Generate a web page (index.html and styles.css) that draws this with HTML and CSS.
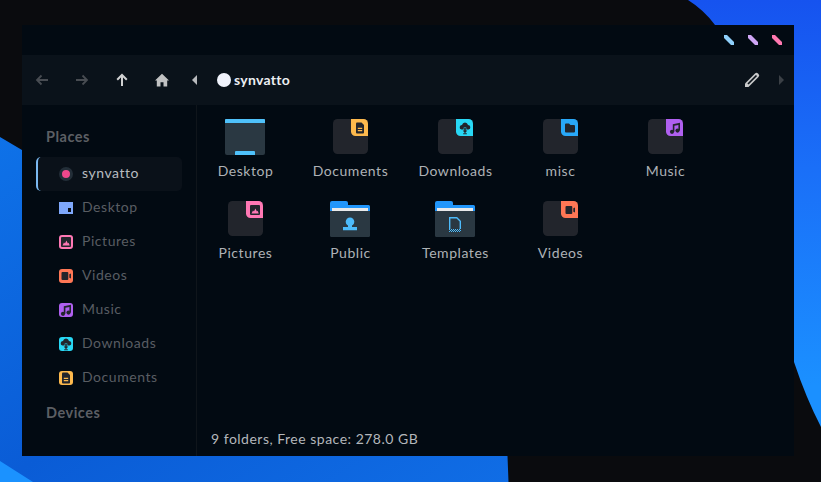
FILE: index.html
```html
<!DOCTYPE html>
<html lang="en">
<head>
<meta charset="utf-8">
<title>synvatto - Dolphin</title>
<link rel="stylesheet" href="styles.css">
</head>
<body>
<svg class="wallpaper" viewBox="0 0 821 482" aria-hidden="true">
  <defs>
    <linearGradient id="wpRight" x1="0" y1="0" x2="0" y2="1"><stop offset="0" stop-color="#1653ef"/><stop offset="0.35" stop-color="#1a6ff8"/><stop offset="0.8" stop-color="#1b90ff"/></linearGradient>
    <linearGradient id="wpLeft" x1="0" y1="0" x2="1" y2="1"><stop offset="0" stop-color="#0f74ea"/><stop offset="0.5" stop-color="#0a5cd6"/><stop offset="1" stop-color="#1170e8"/></linearGradient>
  </defs>
  <rect x="600" width="221" height="482" fill="url(#wpRight)"/>
  <rect width="600" y="100" height="382" fill="url(#wpLeft)"/>
  <path d="M0 461 L33 482 L0 482 Z" fill="#1b92ff"/>
  <path d="M0 0 H688 Q704 10 715 25 L794 362 Q806 398 821 427 V482 H508.500 L507.500 456 L22 150 L0 137 Z" fill="#0a0b0e"/>
</svg>

<svg class="defs" aria-hidden="true">
  <symbol id="g-doc" viewBox="0 0 14 14"><path d="M3 2.500a1 1 0 0 1 1-1h4.500L11 4v7.500a1 1 0 0 1-1 1H4a1 1 0 0 1-1-1Z" fill="currentColor"/><path d="M4.800 6.800h4.400v1.200H4.800ZM4.800 9h4.400v1.200H4.800Z" fill="var(--accent)"/></symbol>
  <symbol id="g-pic" viewBox="0 0 14 14"><rect x="2" y="2" width="10" height="10" rx="1" fill="currentColor"/><path d="M3.500 10.500 5 7.500l1 1.100L7.400 5.500l1.500 3 .8-.8 1 2.800Z" fill="var(--accent)"/></symbol>
  <symbol id="g-vid" viewBox="0 0 14 14"><rect x="2.500" y="3" width="6.800" height="8" rx="1" fill="currentColor"/><path d="M10.300 5.200 12 4.400v5.200l-1.700-.8Z" fill="currentColor"/></symbol>
  <symbol id="g-mus" viewBox="0 0 14 14"><path d="M4.800 3.200 12 1.800v7.700h-1.600V4L6.400 4.800v6h-1.600Z" fill="currentColor"/><circle cx="4" cy="10.800" r="2.100" fill="currentColor"/><circle cx="9.500" cy="9.600" r="2.100" fill="currentColor"/></symbol>
  <symbol id="g-dl" viewBox="0 0 14 14"><path d="M7 1.500a3.200 3.200 0 0 1 3 2.400 2.400 2.400 0 0 1 .6 4.700H8.300V6.500H5.700v2.100H3.400A2.400 2.400 0 0 1 4 3.900 3.200 3.200 0 0 1 7 1.500Z" fill="currentColor"/><path d="M6.200 7h1.600v2.500h1.500L7 12.300 4.700 9.500h1.500ZM5.200 12.300h3.600v.9H5.200Z" fill="currentColor"/></symbol>
  <symbol id="g-fld" viewBox="0 0 14 14"><path d="M2 3.500a1 1 0 0 1 1-1h3l1.500 1.500H11a1 1 0 0 1 1 1v5.500a1 1 0 0 1-1 1H3a1 1 0 0 1-1-1Z" fill="currentColor"/></symbol>
  <symbol id="f-square" viewBox="0 0 35 35"><rect width="35" height="35" rx="4.500" fill="#22252c"/></symbol>
  <symbol id="f-folder" viewBox="0 0 40 36"><path d="M0 2a2 2 0 0 1 2-2h14a2 2 0 0 1 2 2v2h20.500a1.500 1.500 0 0 1 1.500 1.500V14H0Z" fill="#2196fb"/><rect x="2" y="7" width="36" height="4" fill="#e8e9ea"/><path d="M0 10h40v24.500a1.500 1.500 0 0 1-1.500 1.500H1.500A1.500 1.500 0 0 1 0 34.500Z" fill="#2a3842"/></symbol>
</svg>

<main class="window">
  <header class="titlebar">
    <span class="dot dot-blue"></span>
    <span class="dot dot-violet"></span>
    <span class="dot dot-pink"></span>
  </header>

  <nav class="toolbar">
    <svg class="tool tool-back" viewBox="0 0 14 14"><path d="M13 7H2M6.500 2.500 2 7l4.500 4.500" fill="none" stroke="currentColor" stroke-width="1.800"/></svg>
    <svg class="tool tool-forward" viewBox="0 0 14 14"><path d="M1 7h11M7.500 2.500 12 7l-4.500 4.500" fill="none" stroke="currentColor" stroke-width="1.800"/></svg>
    <svg class="tool tool-up" viewBox="0 0 14 14"><path d="M7 13V2M2.200 6.800 7 2l4.800 4.800" fill="none" stroke="currentColor" stroke-width="2"/></svg>
    <svg class="tool tool-home" viewBox="0 0 14 14"><path d="M7 .8 14 7.500h-1.800V13.500H8.500V9.300h-3v4.200H1.800V7.500H0Z" fill="currentColor"/></svg>
    <svg class="tool-arrow" viewBox="0 0 5 10"><path d="M5 0v10L0 5Z" fill="currentColor"/></svg>
    <div class="crumb">
      <span class="crumb-disc"></span>
      <span class="crumb-text">synvatto</span>
    </div>
    <svg class="tool tool-edit" viewBox="0 0 16 16"><path d="M1 15v-3.500L11 1.500q1.500-1.500 3 0l.5.5q1.500 1.500 0 3L4.500 15Z" fill="currentColor"/><path d="M4 12 12.500 3.500" stroke="#0a121a" stroke-width="1.700"/></svg>
    <svg class="tool-arrow tool-arrow-end" viewBox="0 0 5 10"><path d="M0 0v10l5-5Z" fill="currentColor"/></svg>
  </nav>

  <div class="body">
    <aside class="sidebar">
      <h2 class="side-title">Places</h2>
      <ul class="places">
        <li class="place place-active"><span class="badge badge-home"></span><span class="place-name">synvatto</span></li>
        <li class="place"><span class="badge badge-desktop"></span><span class="place-name">Desktop</span></li>
        <li class="place"><span class="badge badge-pink"><svg><use href="#g-pic"/></svg></span><span class="place-name">Pictures</span></li>
        <li class="place"><span class="badge badge-orange"><svg><use href="#g-vid"/></svg></span><span class="place-name">Videos</span></li>
        <li class="place"><span class="badge badge-purple"><svg><use href="#g-mus"/></svg></span><span class="place-name">Music</span></li>
        <li class="place"><span class="badge badge-cyan"><svg><use href="#g-dl"/></svg></span><span class="place-name">Downloads</span></li>
        <li class="place"><span class="badge badge-yellow"><svg><use href="#g-doc"/></svg></span><span class="place-name">Documents</span></li>
      </ul>
      <h2 class="side-title side-title-devices">Devices</h2>
    </aside>

    <section class="content">
      <div class="grid">
        <div class="item">
          <div class="icon icon-desktop"><span class="desk-top"></span><span class="desk-tab"></span></div>
          <span class="label">Desktop</span>
        </div>
        <div class="item">
          <div class="icon icon-square"><svg class="sq"><use href="#f-square"/></svg><span class="corner badge-yellow"><svg><use href="#g-doc"/></svg></span></div>
          <span class="label">Documents</span>
        </div>
        <div class="item">
          <div class="icon icon-square"><svg class="sq"><use href="#f-square"/></svg><span class="corner badge-cyan"><svg><use href="#g-dl"/></svg></span></div>
          <span class="label">Downloads</span>
        </div>
        <div class="item">
          <div class="icon icon-square"><svg class="sq"><use href="#f-square"/></svg><span class="corner badge-blue"><svg><use href="#g-fld"/></svg></span></div>
          <span class="label">misc</span>
        </div>
        <div class="item">
          <div class="icon icon-square"><svg class="sq"><use href="#f-square"/></svg><span class="corner badge-purple"><svg><use href="#g-mus"/></svg></span></div>
          <span class="label">Music</span>
        </div>
        <div class="item">
          <div class="icon icon-square"><svg class="sq"><use href="#f-square"/></svg><span class="corner badge-pink"><svg><use href="#g-pic"/></svg></span></div>
          <span class="label">Pictures</span>
        </div>
        <div class="item">
          <div class="icon icon-folder"><svg class="fld"><use href="#f-folder"/></svg>
            <svg class="emblem" viewBox="0 0 16 16"><circle cx="8" cy="4.800" r="4.300" fill="#4dbbfb"/><path d="M6 8h4v2h5v3.200H1V10h5Z" fill="#4dbbfb"/></svg>
          </div>
          <span class="label">Public</span>
        </div>
        <div class="item">
          <div class="icon icon-folder"><svg class="fld"><use href="#f-folder"/></svg>
            <svg class="emblem" viewBox="0 0 16 16"><path d="M2.700 12V.8h7.100l3.500 3.500V12" fill="none" stroke="#4dbbfb" stroke-width="1.400"/><path d="M2 12.500h12M3 13.500h11M2 14.500h12" stroke="#4dbbfb" stroke-width="1" stroke-dasharray="1 1"/></svg>
          </div>
          <span class="label">Templates</span>
        </div>
        <div class="item">
          <div class="icon icon-square"><svg class="sq"><use href="#f-square"/></svg><span class="corner badge-orange"><svg><use href="#g-vid"/></svg></span></div>
          <span class="label">Videos</span>
        </div>
      </div>
      <footer class="status">9 folders, Free space: 278.0 GB</footer>
    </section>
  </div>
</main>
</body>
</html>
```

FILE: styles.css
```css
* { box-sizing: border-box; }

html, body {
  margin: 0;
  height: 482px;
  overflow: hidden;
}

body {
  background: #0a0b0e;
  font-family: "Lato", "Open Sans", sans-serif;
  padding: 25px 27px 26px 22px;
}

.wallpaper {
  position: absolute;
  left: 0;
  top: 0;
  width: 821px;
  height: 482px;
}

.defs {
  position: absolute;
  width: 0;
  height: 0;
}

.window {
  position: relative;
  width: 772px;
  height: 431px;
  background: #020a12;
  display: flex;
  flex-direction: column;
}

.titlebar {
  height: 30px;
  display: flex;
  justify-content: flex-end;
  align-items: center;
  gap: 14px;
  padding-right: 12px;
  flex: none;
}

.dot {
  width: 10px;
  height: 10px;
  clip-path: polygon(0 0, 30% 0, 100% 70%, 100% 100%, 70% 100%, 0 30%);
}
.dot-blue { background: #8fd0fb; }
.dot-violet { background: #cfa6f5; }
.dot-pink { background: #ff78b0; }

.toolbar {
  height: 50px;
  flex: none;
  background: #0a121a;
  display: flex;
  align-items: center;
  padding-left: 13px;
  color: #c8c9ca;
}

.tool { width: 14px; height: 14px; flex: none; }
.tool-back, .tool-forward { color: #484c52; margin-right: 26px; }
.tool-up { margin-right: 26px; color: #d0d1d2; }
.tool-home { margin-right: 23px; color: #c0c1c2; }
.tool-arrow { width: 5px; height: 10px; flex: none; color: #b8babd; }
.tool-arrow-end { color: #3b4046; margin-left: 19px; margin-right: 10px; }
.tool-edit { width: 16px; height: 16px; margin-left: auto; }

.crumb {
  display: flex;
  align-items: center;
  margin-left: 20px;
}
.crumb-disc {
  width: 14px;
  height: 14px;
  border-radius: 50%;
  background: #f0f3fc;
}
.crumb-text {
  margin-left: 3px;
  padding-bottom: 2px;
  color: #eceef2;
  font-size: 14px;
  font-weight: 700;
  letter-spacing: 0.3px;
}

.body {
  flex: 1;
  min-height: 0;
  display: flex;
}

.sidebar {
  width: 175px;
  flex: none;
  border-right: 1px solid #0f151b;
  padding: 23px 14px 0;
}

.side-title {
  margin: 0 0 0 10px;
  font-size: 14.500px;
  line-height: 17px;
  font-weight: 700;
  color: #5c5f64;
  letter-spacing: 0.5px;
}

.side-title-devices { margin-top: 9px; }

.places {
  list-style: none;
  margin: 12px 0 0;
  padding: 0;
}

.place {
  height: 34px;
  width: 146px;
  display: flex;
  align-items: center;
  padding-left: 23px;
  font-size: 14px;
  letter-spacing: 0.55px;
  color: #595d63;
}

.place-name { padding-bottom: 4px; }

.place-active {
  background: #0a1119;
  color: #b8bcc0;
  border-left: 2px solid #7ab8f0;
  border-radius: 5px;
  padding-left: 21px;
}

.badge {
  width: 14px;
  height: 14px;
  margin-right: 9px;
  border-radius: 3px;
  flex: none;
  display: block;
  color: #22252c;
}
.badge svg, .corner svg { display: block; width: 14px; height: 14px; }

.badge-home {
  background: #f0488c;
  border-radius: 50%;
  border: 3px solid #232e38;
}
.badge-desktop {
  background: #7fa8fb;
  border-radius: 0;
  height: 12px;
  position: relative;
}
.badge-desktop::after {
  content: "";
  position: absolute;
  right: 2px;
  bottom: 2px;
  width: 3px;
  height: 4px;
  background: #0a0f18;
}
.badge-pink { background: #ff78b4; --accent: #ff78b4; }
.badge-orange { background: #ff7755; --accent: #ff7755; }
.badge-purple { background: #b060f0; --accent: #b060f0; }
.badge-cyan { background: #28d8f5; --accent: #28d8f5; }
.badge-yellow { background: #fdb94d; --accent: #fdb94d; }
.badge-blue { background: #28a8f8; --accent: #28a8f8; }

.content {
  flex: 1;
  min-width: 0;
  display: flex;
  flex-direction: column;
  justify-content: space-between;
}

.grid {
  display: grid;
  grid-template-columns: repeat(5, 97px);
  column-gap: 8px;
  grid-auto-rows: 74px;
  row-gap: 8px;
  padding-top: 14px;
}

.item {
  display: flex;
  flex-direction: column;
  align-items: center;
}

.icon {
  position: relative;
  flex: none;
  height: 36px;
}

.icon-desktop {
  width: 40px;
  margin-right: 1px;
  background: #2a3842;
  border-radius: 0 0 2px 2px;
}
.desk-top {
  display: block;
  height: 4px;
  background: #4fc1fa;
  border-radius: 1px 1px 0 0;
}
.desk-tab {
  position: absolute;
  left: 10px;
  bottom: 0;
  width: 20px;
  height: 4px;
  background: #4fc1fa;
  border-radius: 1px 1px 0 0;
}

.icon-square { width: 35px; }
.sq { display: block; width: 35px; height: 35px; }
.corner {
  position: absolute;
  right: 0;
  top: 0;
  width: 17px;
  height: 17px;
  border-radius: 0 4.500px 0 4.500px;
  padding: 1.500px;
  color: #22252c;
  display: block;
}

.icon-folder { width: 40px; margin-right: 1px; }
.fld { display: block; width: 40px; height: 36px; }
.emblem {
  position: absolute;
  left: 12px;
  top: 16px;
  width: 16px;
  height: 16px;
}

.label {
  margin-top: 7px;
  font-size: 14px;
  line-height: 18px;
  letter-spacing: 0.55px;
  color: #aeb2b6;
  white-space: nowrap;
}

.status {
  padding: 0 0 8px 14px;
  font-size: 14px;
  line-height: 18px;
  letter-spacing: 0.5px;
  color: #b4b7bb;
}
```
